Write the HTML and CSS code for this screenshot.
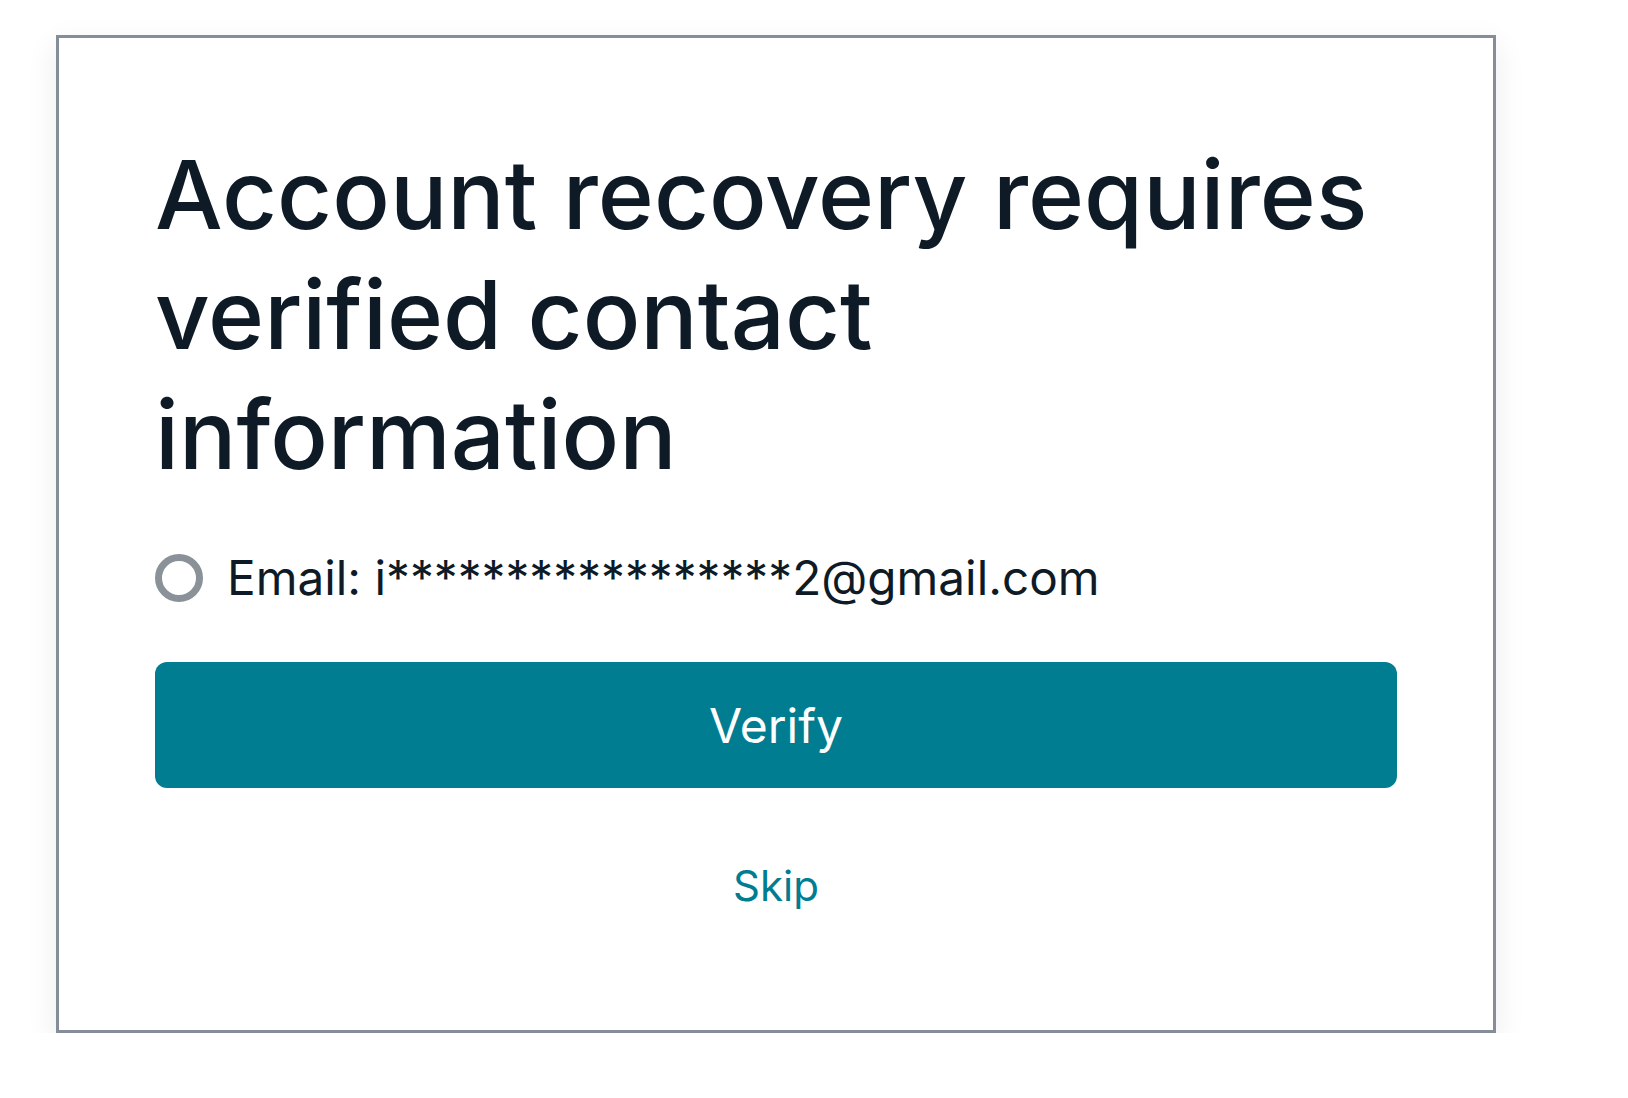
FILE: index.html
```html
<!DOCTYPE html>
<html lang="en">
<head>
    <meta charset="UTF-8">
    <meta name="viewport" content="width=device-width, initial-scale=1.0">
    <title>Account recovery</title>
    <link rel="stylesheet" href="styles.css">
</head>
<body>
    <div class="card">
        <h1 class="title">Account recovery requires verified contact information</h1>
        <label class="option">
            <span class="radio"></span>
            <span class="option-text">Email: i*****************2@gmail.com</span>
        </label>
        <button class="verify">Verify</button>
        <a class="skip" href="#">Skip</a>
    </div>
</body>
</html>
```

FILE: styles.css
```css
body {
    margin: 0;
    padding: 0;
    background: #fff;
    font-family: Inter, "Noto Sans", sans-serif;
    color: #0e1b26;
}
.card {
    box-sizing: border-box;
    width: 1440px;
    height: 998px;
    margin: 35px 0 0 56px;
    padding: 96px 96px 0 96px;
    border: 3px solid #858e98;
    background: #fff;
    box-shadow: 0 10px 30px rgba(0, 0, 0, 0.08);
    display: flex;
    flex-direction: column;
}
.title {
    margin: 0;
    font-size: 95.5px;
    line-height: 120px;
    font-weight: 500;
    letter-spacing: 0;
}
.option {
    display: flex;
    align-items: center;
    gap: 24px;
    margin-top: 48px;
    height: 72px;
    font-size: 47.7px;
    line-height: 72px;
}
.radio {
    box-sizing: border-box;
    width: 48px;
    height: 48px;
    border: 7px solid #8a9199;
    border-radius: 50%;
    flex-shrink: 0;
}
.verify {
    margin-top: 48px;
    height: 126px;
    border: none;
    border-radius: 12px;
    background: #017d92;
    color: #fff;
    font-family: inherit;
    font-size: 48px;
    cursor: pointer;
}
.skip {
    align-self: center;
    margin-top: 62px;
    font-size: 42px;
    line-height: 72px;
    color: #017d92;
    text-decoration: none;
}
```
